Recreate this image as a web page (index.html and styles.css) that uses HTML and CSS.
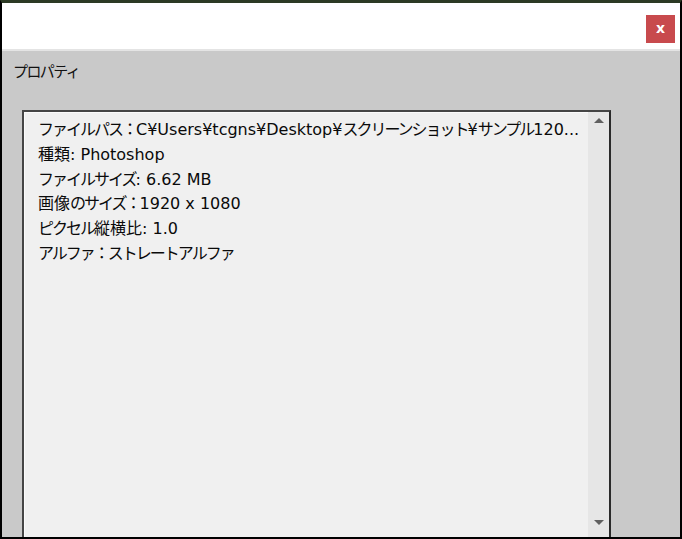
FILE: index.html
```html
<!DOCTYPE html>
<html lang="ja">
<head>
<meta charset="utf-8">
<link rel="stylesheet" href="styles.css">
</head>
<body>
<div class="window">
  <div class="titlebar">
    <div class="close">x</div>
  </div>
  <div class="content">
    <div class="label">プロパティ</div>
    <div class="box">
      <div class="text">
        <div class="line"><span class="k">ファイルパス：</span>C¥Users¥tcgns¥Desktop¥<span class="k">スクリーンショット</span>¥<span class="k">サンプル</span>120...</div>
        <div class="line">種類: Photoshop</div>
        <div class="line"><span class="k">ファイルサイズ</span>: 6.62 MB</div>
        <div class="line">画像<span class="k">のサイズ：</span>1920 x 1080</div>
        <div class="line"><span class="k">ピクセル</span>縦横比: 1.0</div>
        <div class="line"><span class="k">アルファ：ストレートアルファ</span></div>
      </div>
      <div class="scrollbar">
        <div class="arrow up"></div>
        <div class="arrow down"></div>
      </div>
    </div>
  </div>
</div>
</body>
</html>
```
FILE: styles.css
```css
html, body {
  margin: 0;
  padding: 0;
  background: #ffffff;
}
.window {
  width: 682px;
  height: 539px;
  box-sizing: border-box;
  border-top: 3px solid #2c3a24;
  border-left: 2px solid #000;
  border-right: 2px solid #000;
  border-bottom: 2px solid #000;
  display: flex;
  flex-direction: column;
  font-family: "DejaVu Sans", "Noto Sans CJK JP", sans-serif;
}
.titlebar {
  height: 48px;
  background: #ffffff;
  border-bottom: 2px solid #e4e4e4;
  display: flex;
  justify-content: flex-end;
  align-items: flex-start;
  padding-top: 12px;
  box-sizing: border-box;
  flex: none;
}
.close {
  width: 29px;
  height: 28px;
  background: #c84a4d;
  color: #fff;
  font-family: "DejaVu Sans", sans-serif;
  font-weight: bold;
  font-size: 14px;
  line-height: 26px;
  text-align: center;
  margin-right: 5px;
}
.content {
  flex: 1;
  background: #c9c9c9;
  display: flex;
  flex-direction: column;
  padding-left: 20px;
  padding-right: 69px;
}
.label {
  font-family: "Noto Sans CJK JP", sans-serif;
  font-size: 15px;
  letter-spacing: -1.6px;
  color: #111;
  line-height: 18px;
  margin-top: 11px;
  margin-left: -9px;
  height: 48px;
  flex: none;
}
.box {
  flex: 1;
  display: flex;
  border-top: 2px solid #454545;
  border-left: 2px solid #454545;
  border-right: 2px solid #2a2a2a;
  background: #f0f0f0;
  box-shadow: inset 1px 1px 0 #fbfbfb;
}
.text {
  flex: 1;
  padding: 6px 0 0 14px;
  color: #0a0a0a;
  font-size: 16px;
}
.line {
  height: 24.8px;
  line-height: 24px;
  white-space: nowrap;
}
.k {
  font-family: "Noto Sans CJK JP", sans-serif;
  letter-spacing: -2px;
  line-height: 0;
}
.scrollbar {
  width: 21px;
  background: #e6e6e6;
  display: flex;
  flex-direction: column;
  justify-content: space-between;
  align-items: center;
  padding: 6px 0 12px;
}
.arrow {
  width: 0;
  height: 0;
  border-left: 5px solid transparent;
  border-right: 5px solid transparent;
}
.arrow.up {
  border-bottom: 5px solid #606060;
}
.arrow.down {
  border-top: 5px solid #606060;
}
```
